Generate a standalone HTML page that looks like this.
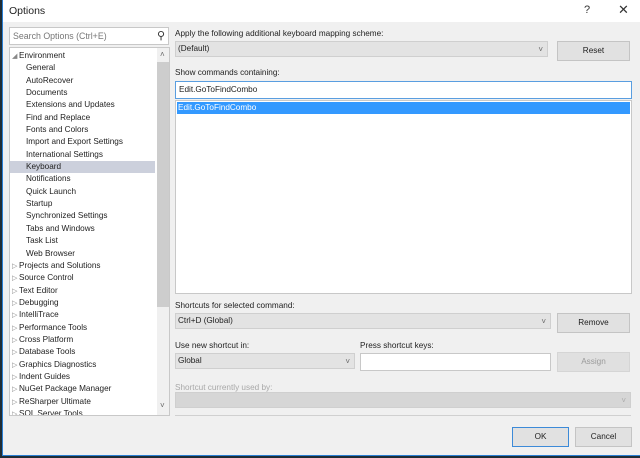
<!DOCTYPE html>
<html><head><style>
*{box-sizing:border-box;margin:0;padding:0}
body{width:640px;height:458px;background:#1f2d35;font-family:"Liberation Sans",sans-serif;font-size:8.2px;color:#1e1e1e;position:relative;overflow:hidden}
.win{position:absolute;left:2px;top:0;width:638px;height:456px;background:#f0f0f0;border-left:1px solid #2a7fd4;border-bottom:1px solid #2a7fd4}
.tb{position:absolute;left:0;top:0;width:637px;height:22px;background:#fff}
.a{position:absolute}
.lbl{position:absolute;white-space:nowrap}
.box{position:absolute;border:1px solid #c8c8c8;background:#fff}
.combo{position:absolute;border:1px solid #cfcfcf;background:#e3e3e3;padding:2px 0 0 2px;white-space:nowrap}
.chev{position:absolute;right:4px;top:3px;color:#666;font-size:8px}
.btn{position:absolute;border:1px solid #c4c4c4;background:#e1e1e1;text-align:center;line-height:18px}
.tree div{height:12.35px;line-height:12.35px;white-space:nowrap}
.c{padding-left:16px}
.p{padding-left:2px}
.p span{display:inline-block;width:7px;color:#888;font-size:7px}
</style></head><body>
<div class="win">
<div class="tb"></div>
<div class="lbl" style="left:6px;top:5px;font-size:10.5px">Options</div>
<div class="lbl" style="left:581px;top:4px;font-size:11px;color:#333">?</div>
<div class="lbl" style="left:615px;top:2px;font-size:13px;color:#333">✕</div>

<div class="box" style="left:6px;top:27px;width:160px;height:18px"><span style="position:absolute;left:3px;top:3px;color:#777;font-size:8.8px">Search Options (Ctrl+E)</span><span style="position:absolute;right:3px;top:1px;font-size:11px;color:#333">⚲</span></div>

<div class="box tree" style="left:6px;top:47px;width:161px;height:369px;overflow:hidden;padding-top:2px">
<div class="p"><span>◢</span>Environment</div>
<div class="c">General</div><div class="c">AutoRecover</div><div class="c">Documents</div><div class="c">Extensions and Updates</div><div class="c">Find and Replace</div><div class="c">Fonts and Colors</div><div class="c">Import and Export Settings</div><div class="c">International Settings</div>
<div class="c" style="background:#ccd0dc;width:145px">Keyboard</div>
<div class="c">Notifications</div><div class="c">Quick Launch</div><div class="c">Startup</div><div class="c">Synchronized Settings</div><div class="c">Tabs and Windows</div><div class="c">Task List</div><div class="c">Web Browser</div>
<div class="p"><span>▷</span>Projects and Solutions</div><div class="p"><span>▷</span>Source Control</div><div class="p"><span>▷</span>Text Editor</div><div class="p"><span>▷</span>Debugging</div><div class="p"><span>▷</span>IntelliTrace</div><div class="p"><span>▷</span>Performance Tools</div><div class="p"><span>▷</span>Cross Platform</div><div class="p"><span>▷</span>Database Tools</div><div class="p"><span>▷</span>Graphics Diagnostics</div><div class="p"><span>▷</span>Indent Guides</div><div class="p"><span>▷</span>NuGet Package Manager</div><div class="p"><span>▷</span>ReSharper Ultimate</div><div class="p"><span>▷</span>SQL Server Tools</div>
<div class="a" style="left:147px;top:0;width:12px;height:367px;background:#f0f0f0"></div>
<div class="a" style="left:147px;top:14px;width:12px;height:245px;background:#cdcdcd"></div>
<div class="a" style="left:150px;top:1px;font-size:8px;color:#666;height:auto;line-height:12px">˄</div>
<div class="a" style="left:150px;top:352px;font-size:8px;color:#666;height:auto;line-height:12px">˅</div>
</div>

<div class="lbl" style="left:172px;top:29px">Apply the following additional keyboard mapping scheme:</div>
<div class="combo" style="left:172px;top:41px;width:373px;height:16px">(Default)<span class="chev">˅</span></div>
<div class="btn" style="left:554px;top:41px;width:73px;height:20px">Reset</div>

<div class="lbl" style="left:172px;top:68px">Show commands containing:</div>
<div class="box" style="left:172px;top:81px;width:457px;height:18px;border-color:#5a9ee0;padding:3px 0 0 3px">Edit.GoToFindCombo</div>
<div class="box" style="left:172px;top:100px;width:457px;height:194px;padding:1px"><div style="background:#3399ff;color:#fff;height:12px;line-height:12px;padding-left:1px">Edit.GoToFindCombo</div></div>

<div class="lbl" style="left:172px;top:301px">Shortcuts for selected command:</div>
<div class="combo" style="left:172px;top:313px;width:376px;height:16px">Ctrl+D (Global)<span class="chev">˅</span></div>
<div class="btn" style="left:554px;top:313px;width:73px;height:20px">Remove</div>

<div class="lbl" style="left:172px;top:341px">Use new shortcut in:</div>
<div class="combo" style="left:172px;top:353px;width:180px;height:16px">Global<span class="chev">˅</span></div>
<div class="lbl" style="left:357px;top:341px">Press shortcut keys:</div>
<div class="box" style="left:357px;top:353px;width:191px;height:18px"></div>
<div class="btn" style="left:554px;top:352px;width:73px;height:20px;color:#9a9a9a;background:#e0e0e0;border-color:#d5d5d5">Assign</div>

<div class="lbl" style="left:172px;top:383px;color:#a8a8a8">Shortcut currently used by:</div>
<div class="combo" style="left:172px;top:392px;width:456px;height:16px;background:#d6d6d6;border-color:#cfcfcf"><span class="chev" style="color:#aaa">˅</span></div>
<div class="a" style="left:172px;top:415px;width:456px;height:1px;background:#d0d0d0"></div>

<div class="btn" style="left:509px;top:427px;width:57px;height:20px;border-color:#3c8ad8">OK</div>
<div class="btn" style="left:572px;top:427px;width:57px;height:20px">Cancel</div>
</div>
</body></html>
